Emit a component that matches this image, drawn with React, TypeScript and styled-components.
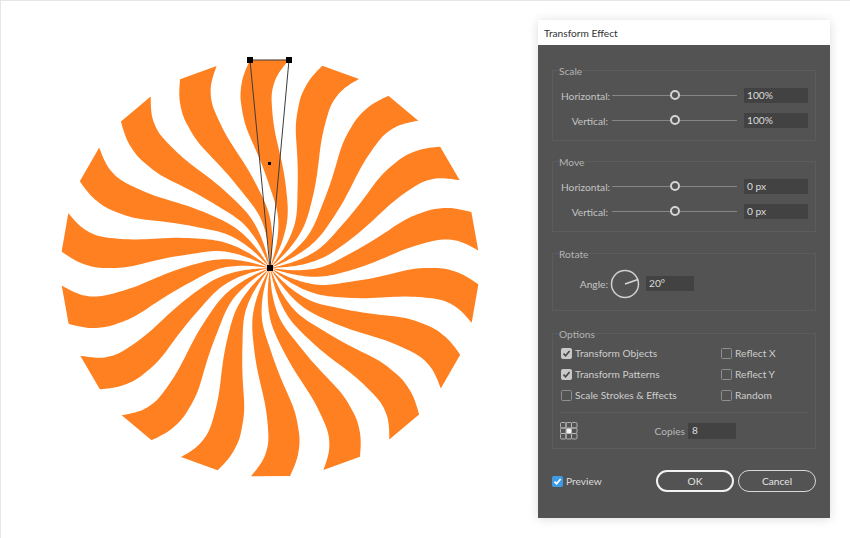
import { createGlobalStyle, styled } from "styled-components";

const BLADE_COUNT = 18;
const CENTER = { x: 270, y: 268 };

// blade edges as [radius, degrees from straight up], read off the artwork
const RIGHT_EDGE: [number, number][] = [
  [209, 5.2], [188, 1.6], [165, 0.6], [128, 3], [83, 11], [48, 20.5], [20, 26], [0, 28],
];
const LEFT_EDGE: [number, number][] = [
  [209, -5.5], [188, -8.6], [165, -10], [133, -8.7], [83, -0.6], [48, 10], [20, 16], [0, 18],
];

function toPoint(r: number, deg: number) {
  const a = (deg * Math.PI) / 180;
  return `${(CENTER.x + r * Math.sin(a)).toFixed(2)} ${(CENTER.y - r * Math.cos(a)).toFixed(2)}`;
}

// catmull-rom through the table, sampled into short segments
function sampleEdge(edge: [number, number][]) {
  const out: string[] = [];
  for (let i = 0; i < edge.length - 1; i++) {
    const p0 = edge[Math.max(i - 1, 0)];
    const p1 = edge[i];
    const p2 = edge[i + 1];
    const p3 = edge[Math.min(i + 2, edge.length - 1)];
    for (let s = 0; s < 10; s++) {
      const t = s / 10;
      const at = (k: 0 | 1) =>
        0.5 *
        (2 * p1[k] +
          (p2[k] - p0[k]) * t +
          (2 * p0[k] - 5 * p1[k] + 4 * p2[k] - p3[k]) * t * t +
          (3 * p1[k] - p0[k] - 3 * p2[k] + p3[k]) * t * t * t);
      out.push(toPoint(at(0), at(1)));
    }
  }
  out.push(toPoint(0, 0));
  return out;
}

const BLADE_PATH = `M${[...sampleEdge(RIGHT_EDGE), ...sampleEdge(LEFT_EDGE).reverse()].join(" L")} Z`;

const GlobalStyle = createGlobalStyle`
  html, body {
    margin: 0;
    padding: 0;
    background: #fff;
  }
  body {
    font-family: Lato, "Noto Sans", sans-serif;
  }
`;

const Page = styled.div`
  width: 850px;
  height: 538px;
  display: flex;
  overflow: hidden;
  background: #fff;
  box-shadow: inset 1px 1px 0 #e6e6e6;
`;

const Canvas = styled.svg`
  width: 538px;
  height: 538px;
  flex: none;
  display: block;
`;

const Dialog = styled.div`
  width: 292px;
  height: 498px;
  margin-top: 20px;
  display: flex;
  flex-direction: column;
  box-shadow: 0 1px 10px rgba(0, 0, 0, 0.14);
`;

const TitleBar = styled.div`
  height: 25px;
  flex: none;
  display: flex;
  align-items: center;
  padding-left: 6px;
  background: #fff;
  color: #333;
  font-size: 10.2px;
`;

const Body = styled.div`
  flex: 1;
  background: #535353;
  padding: 18px 14px 0;
  display: flex;
  flex-direction: column;
  color: #c4c4c4;
  font-size: 10.2px;
`;

const Group = styled.fieldset<{ $height: number; $top?: number }>`
  box-sizing: border-box;
  height: ${(p) => p.$height}px;
  margin: ${(p) => p.$top ?? 0}px 0 0;
  padding: 0 8px;
  border: 1px solid #5c5c5c;
  min-width: 0;
`;

const Legend = styled.legend`
  padding: 0;
  margin-left: -2px;
  height: 14px;
  line-height: 16px;
  color: #b4b4b4;
`;

const SliderRows = styled.div`
  display: flex;
  flex-direction: column;
  gap: 10px;
  padding-top: 11px;
`;

const SliderRowWrap = styled.div`
  height: 15px;
  display: flex;
  align-items: center;
`;

const RowLabel = styled.span`
  width: 47px;
  flex: none;
  text-align: right;
  white-space: nowrap;
`;

const Track = styled.div`
  position: relative;
  width: 125px;
  height: 1px;
  flex: none;
  margin: 0 7px 0 4px;
  background: #868686;
`;

const Thumb = styled.div`
  position: absolute;
  left: 58px;
  top: -5px;
  box-sizing: border-box;
  width: 10px;
  height: 10px;
  border: 2px solid #d4d4d4;
  border-radius: 50%;
  background: #535353;
`;

const ValueBox = styled.div<{ $width: number }>`
  box-sizing: border-box;
  width: ${(p) => p.$width}px;
  height: 15px;
  flex: none;
  padding-left: 3px;
  line-height: 15px;
  background: #424242;
  color: #dcdcdc;
`;

const RotateRow = styled.div`
  height: 29px;
  margin-top: 9px;
  display: flex;
  align-items: center;
`;

const Dial = styled.svg`
  width: 30px;
  height: 30px;
  flex: none;
  margin: 0 6px 0 2px;
`;

const OptionGrid = styled.div`
  display: grid;
  grid-template-columns: 160px 1fr;
  grid-auto-rows: 16px;
  row-gap: 5px;
  padding-top: 5px;
`;

const CheckRow = styled.div`
  display: flex;
  align-items: center;
  gap: 3px;
  white-space: nowrap;
  color: #cdcdcd;
`;

const Box = styled.span<{ $checked?: boolean; $blue?: boolean }>`
  box-sizing: border-box;
  width: 11px;
  height: 11px;
  flex: none;
  display: flex;
  align-items: center;
  justify-content: center;
  border-radius: 1.5px;
  border: 1px solid ${(p) => (p.$blue ? "#3f9be6" : p.$checked ? "#c9c9c9" : "#8f8f8f")};
  background: ${(p) => (p.$blue ? "#3f9be6" : p.$checked ? "#c9c9c9" : "transparent")};
`;

const Divider = styled.div`
  height: 1px;
  margin-top: 9px;
  background: #5e5e5e;
`;

const CopiesRow = styled.div`
  height: 17px;
  margin-top: 9px;
  display: flex;
  align-items: center;
`;

const Origin = styled.svg`
  width: 18px;
  height: 18px;
  flex: none;
  margin-left: -1px;
`;

const CopiesLabel = styled.span`
  margin-left: auto;
  margin-right: 3px;
  color: #b8b8b8;
`;

const CopiesBox = styled(ValueBox)`
  height: 16px;
  margin-right: 71px;
  padding-left: 4px;
`;

const Footer = styled.div`
  height: 22px;
  margin-top: 21px;
  display: flex;
  align-items: center;
`;

const PreviewLabel = styled(CheckRow)`
  color: #dcdcdc;
  gap: 3px;
`;

const Button = styled.div<{ $primary?: boolean }>`
  box-sizing: border-box;
  width: 78px;
  height: 22px;
  display: flex;
  align-items: center;
  justify-content: center;
  border-radius: 11px;
  border: ${(p) => (p.$primary ? "2px solid #f2f2f2" : "1px solid #d8d8d8")};
  color: #e4e4e4;
  margin-left: ${(p) => (p.$primary ? "auto" : "4px")};
`;

function Tick({ color }: { color: string }) {
  return (
    <svg width="9" height="9" viewBox="0 0 9 9">
      <path d="M1.5 4.6 L3.6 6.8 L7.6 2" fill="none" stroke={color} strokeWidth="1.7" />
    </svg>
  );
}

function SliderRow({ label, value }: { label: string; value: string }) {
  return (
    <SliderRowWrap>
      <RowLabel>{label}</RowLabel>
      <Track>
        <Thumb />
      </Track>
      <ValueBox $width={64}>{value}</ValueBox>
    </SliderRowWrap>
  );
}

function Check({ label, checked }: { label: string; checked?: boolean }) {
  return (
    <CheckRow>
      <Box $checked={checked}>{checked && <Tick color="#4a4a4a" />}</Box>
      {label}
    </CheckRow>
  );
}

function SpiralArtwork() {
  const blades = Array.from({ length: BLADE_COUNT }, (_, i) => i * (360 / BLADE_COUNT));
  return (
    <Canvas viewBox="0 0 538 538">
      {blades.map((angle) => (
        <path
          key={angle}
          d={BLADE_PATH}
          fill="#ff8020"
          transform={`rotate(${angle} ${CENTER.x} ${CENTER.y})`}
        />
      ))}
      <path d="M250 60 L289 60 L270 268 Z" fill="none" stroke="#3c3c3c" strokeWidth="1" />
      <rect x="247" y="57" width="6" height="6" fill="#000" />
      <rect x="286" y="57" width="6" height="6" fill="#000" />
      <rect x="267" y="265" width="6" height="6" fill="#000" />
      <rect x="268" y="162" width="3" height="3" fill="#000" />
    </Canvas>
  );
}

function OriginGrid() {
  const cells = [0.5, 6, 11.5];
  return (
    <Origin viewBox="0 0 18 18">
      {cells.map((y) =>
        cells.map((x) =>
          x === 6 && y === 6 ? (
            <rect key="mid" x="6.5" y="6.5" width="5" height="5" fill="#f4f4f4" />
          ) : (
            <rect
              key={`${x}-${y}`}
              x={x}
              y={y}
              width="5.5"
              height="5.5"
              rx="1.2"
              fill="none"
              stroke="#bdbdbd"
              strokeWidth="0.9"
            />
          ),
        ),
      )}
    </Origin>
  );
}

export default function App() {
  return (
    <Page>
      <GlobalStyle />
      <SpiralArtwork />
      <Dialog>
        <TitleBar>Transform Effect</TitleBar>
        <Body>
          <Group $height={78}>
            <Legend>Scale</Legend>
            <SliderRows>
              <SliderRow label="Horizontal:" value="100%" />
              <SliderRow label="Vertical:" value="100%" />
            </SliderRows>
          </Group>
          <Group $height={78} $top={13}>
            <Legend>Move</Legend>
            <SliderRows>
              <SliderRow label="Horizontal:" value="0 px" />
              <SliderRow label="Vertical:" value="0 px" />
            </SliderRows>
          </Group>
          <Group $height={65} $top={14}>
            <Legend>Rotate</Legend>
            <RotateRow>
              <RowLabel>Angle:</RowLabel>
              <Dial viewBox="0 0 30 30">
                <circle cx="15" cy="15" r="13.5" fill="none" stroke="#d0d0d0" strokeWidth="1.5" />
                <path d="M15 15 L28 10.5" stroke="#d8d8d8" strokeWidth="1.6" />
              </Dial>
              <ValueBox $width={48}>20°</ValueBox>
            </RotateRow>
          </Group>
          <Group $height={123} $top={15}>
            <Legend>Options</Legend>
            <OptionGrid>
              <Check label="Transform Objects" checked />
              <Check label="Reflect X" />
              <Check label="Transform Patterns" checked />
              <Check label="Reflect Y" />
              <Check label="Scale Strokes & Effects" />
              <Check label="Random" />
            </OptionGrid>
            <Divider />
            <CopiesRow>
              <OriginGrid />
              <CopiesLabel>Copies</CopiesLabel>
              <CopiesBox $width={48}>8</CopiesBox>
            </CopiesRow>
          </Group>
          <Footer>
            <PreviewLabel>
              <Box $blue>
                <Tick color="#fff" />
              </Box>
              Preview
            </PreviewLabel>
            <Button $primary>OK</Button>
            <Button>Cancel</Button>
          </Footer>
        </Body>
      </Dialog>
    </Page>
  );
}
